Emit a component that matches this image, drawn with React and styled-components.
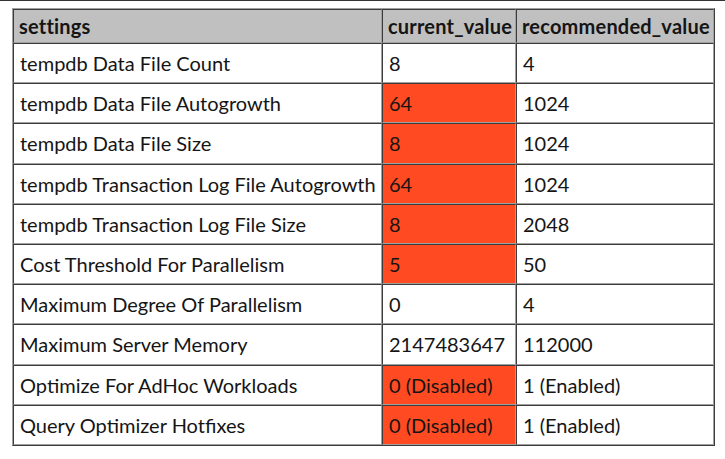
import React from 'react';
import styled, { createGlobalStyle } from 'styled-components';

const GlobalStyle = createGlobalStyle`
    html, body {
        margin: 0;
        padding: 0;
        background: #fff;
    }
    body {
        border-top: 1px solid #333;
        font-family: Lato, "Liberation Sans", sans-serif;
    }
`;

const Page = styled.div`
    padding: 7px 0 0 12px;
`;

const Table = styled.table`
    border-collapse: separate;
    border-spacing: 0;
    table-layout: fixed;
    width: 701px;
    border-style: solid;
    border-width: 1px;
    border-color: #a0a0a0 #3c3c3c #3c3c3c #a0a0a0;
    font-size: 20px;
    color: #151515;
`;

const Col = styled.col`
    width: ${(p) => p.$w}px;
`;

const Cell = styled.td`
    height: 38.2px;
    padding: 0 0 0 6px;
    border-style: solid;
    border-width: 1px;
    border-color: #3c3c3c #a0a0a0 #a0a0a0 #3c3c3c;
    background: ${(p) => (p.$bad ? '#ff4a22' : '#fff')};
    white-space: nowrap;
    overflow: hidden;
    vertical-align: middle;
`;

const HeadCell = styled(Cell).attrs({ as: 'th' })`
    height: 32px;
    background: #c0c0c0;
    font-weight: 700;
    text-align: left;
    padding-left: 5px;
    letter-spacing: 0.2px;
`;

const rows = [
    ['tempdb Data File Count', '8', '4', false],
    ['tempdb Data File Autogrowth', '64', '1024', true],
    ['tempdb Data File Size', '8', '1024', true],
    ['tempdb Transaction Log File Autogrowth', '64', '1024', true],
    ['tempdb Transaction Log File Size', '8', '2048', true],
    ['Cost Threshold For Parallelism', '5', '50', true],
    ['Maximum Degree Of Parallelism', '0', '4', false],
    ['Maximum Server Memory', '2147483647', '112000', false],
    ['Optimize For AdHoc Workloads', '0 (Disabled)', '1 (Enabled)', true],
    ['Query Optimizer Hotfixes', '0 (Disabled)', '1 (Enabled)', true],
];

export default function App() {
    return (
        <React.Fragment>
            <GlobalStyle />
            <Page>
                <Table>
                    <colgroup>
                        <Col $w={369} />
                        <Col $w={134} />
                        <Col $w={198} />
                    </colgroup>
                    <thead>
                        <tr>
                            <HeadCell>settings</HeadCell>
                            <HeadCell>current_value</HeadCell>
                            <HeadCell>recommended_value</HeadCell>
                        </tr>
                    </thead>
                    <tbody>
                        {rows.map(([name, cur, rec, bad]) => (
                            <tr key={name}>
                                <Cell>{name}</Cell>
                                <Cell $bad={bad}>{cur}</Cell>
                                <Cell>{rec}</Cell>
                            </tr>
                        ))}
                    </tbody>
                </Table>
            </Page>
        </React.Fragment>
    );
}
